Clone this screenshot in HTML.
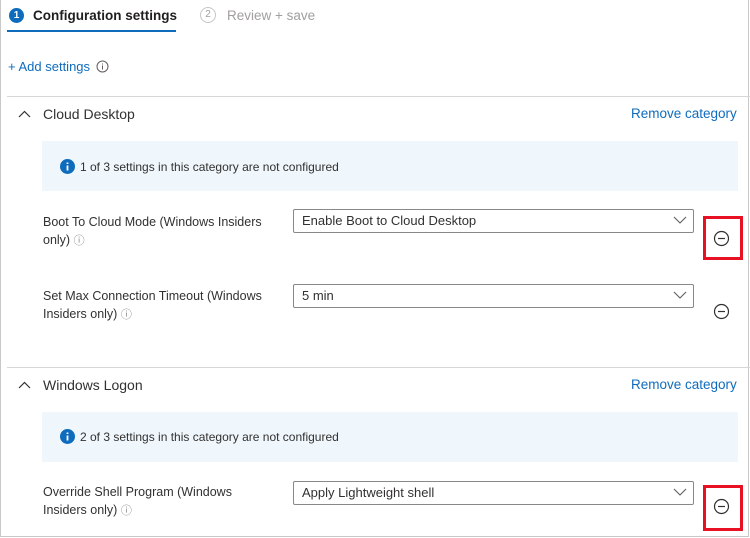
<!DOCTYPE html><html><head><style>
body{margin:0;width:750px;height:538px;position:relative;background:#fff;font-family:"Liberation Sans",sans-serif;overflow:hidden;color:#323130}
.a{position:absolute;white-space:nowrap}
.frame{position:absolute;left:0;top:0;width:747px;height:536px;border:1px solid #c8c8c8;border-top:none}
.hr{position:absolute;left:7px;right:0;height:1px;background:#d6d6d6}
.blue{color:#0f6cbd}
.info{position:absolute;left:42px;width:696px;height:50px;background:#eff6fc}
.dd{position:absolute;left:293px;width:391px;height:22px;border:1px solid #8a8886;border-radius:2px;font-size:13px;line-height:22px;padding-left:8px;box-sizing:content-box}
.dd svg{position:absolute;right:6px;top:6px}
.red{position:absolute;left:703px;width:34px;border:3px solid #e81123}
.lab{font-size:12.5px;line-height:18px}
</style></head><body>
<div class="frame"></div>
<div class="a" style="left:9px;top:8px;width:15px;height:15px;border-radius:50%;background:#0f6cbd;color:#fff;font-size:10px;font-weight:bold;text-align:center;line-height:15px">1</div>
<div class="a" style="left:33px;top:8px;font-size:13.5px;font-weight:bold;color:#201f1e">Configuration settings</div>
<div class="a" style="left:7px;top:30px;width:169px;height:2px;background:#0f6cbd"></div>
<div class="a" style="left:200px;top:7px;width:14px;height:14px;border-radius:50%;border:1px solid #c8c6c4;color:#a19f9d;font-size:10px;text-align:center;line-height:14px">2</div>
<div class="a" style="left:227px;top:8px;font-size:13.5px;color:#a19f9d">Review + save</div>
<div class="a blue" style="left:8px;top:59px;font-size:13px">+ Add settings</div>
<svg class="a" style="left:96px;top:60px" width="13" height="13"><circle cx="6.5" cy="6.5" r="5.5" fill="none" stroke="#605e5c"/><path d="M6.5 5.5v4M6.5 3.5v1" stroke="#605e5c"/></svg>
<div class="hr" style="top:96px"></div>
<svg class="a" style="left:18px;top:110px" width="13" height="8"><path d="M1 7l5.5-5.5L12 7" fill="none" stroke="#323130" stroke-width="1.2"/></svg>
<div class="a" style="left:43px;top:106px;font-size:14px">Cloud Desktop</div>
<div class="a blue" style="left:631px;top:106px;font-size:13.5px">Remove category</div>
<div class="info" style="top:141px"></div>
<svg class="a" style="left:60px;top:159px" width="15" height="15"><circle cx="7.5" cy="7.5" r="7.5" fill="#0f6cbd"/><path d="M7.5 6.5v5M7.5 3.5v1.5" stroke="#fff" stroke-width="1.8"/></svg>
<div class="a" style="left:80px;top:160px;font-size:12px">1 of 3 settings in this category are not configured</div>
<div class="a lab" style="left:43px;top:213px">Boot To Cloud Mode (Windows Insiders<br>only) <span style="color:#8a8886;font-size:11px">ⓘ</span></div>
<div class="dd" style="top:209px">Enable Boot to Cloud Desktop<svg width="14" height="9"><path d="M1 1l6 6 6-6" fill="none" stroke="#605e5c" stroke-width="1.1"/></svg></div>
<div class="red" style="top:216px;height:38px"></div>
<svg class="a" style="left:713px;top:230px" width="17" height="17"><circle cx="8.5" cy="8.5" r="7" fill="none" stroke="#323130" stroke-width="1.2"/><path d="M5 8.5h7" stroke="#323130" stroke-width="1.2"/></svg>
<div class="a lab" style="left:43px;top:287px">Set Max Connection Timeout (Windows<br>Insiders only) <span style="color:#8a8886;font-size:11px">ⓘ</span></div>
<div class="dd" style="top:284px">5 min<svg width="14" height="9"><path d="M1 1l6 6 6-6" fill="none" stroke="#605e5c" stroke-width="1.1"/></svg></div>
<svg class="a" style="left:713px;top:303px" width="17" height="17"><circle cx="8.5" cy="8.5" r="7" fill="none" stroke="#323130" stroke-width="1.2"/><path d="M5 8.5h7" stroke="#323130" stroke-width="1.2"/></svg>
<div class="hr" style="top:367px"></div>
<svg class="a" style="left:18px;top:381px" width="13" height="8"><path d="M1 7l5.5-5.5L12 7" fill="none" stroke="#323130" stroke-width="1.2"/></svg>
<div class="a" style="left:43px;top:377px;font-size:14px">Windows Logon</div>
<div class="a blue" style="left:631px;top:377px;font-size:13.5px">Remove category</div>
<div class="info" style="top:412px"></div>
<svg class="a" style="left:60px;top:429px" width="15" height="15"><circle cx="7.5" cy="7.5" r="7.5" fill="#0f6cbd"/><path d="M7.5 6.5v5M7.5 3.5v1.5" stroke="#fff" stroke-width="1.8"/></svg>
<div class="a" style="left:80px;top:430px;font-size:12px">2 of 3 settings in this category are not configured</div>
<div class="a lab" style="left:43px;top:483px">Override Shell Program (Windows<br>Insiders only) <span style="color:#8a8886;font-size:11px">ⓘ</span></div>
<div class="dd" style="top:481px">Apply Lightweight shell<svg width="14" height="9"><path d="M1 1l6 6 6-6" fill="none" stroke="#605e5c" stroke-width="1.1"/></svg></div>
<div class="red" style="top:485px;height:40px"></div>
<svg class="a" style="left:713px;top:498px" width="17" height="17"><circle cx="8.5" cy="8.5" r="7" fill="none" stroke="#323130" stroke-width="1.2"/><path d="M5 8.5h7" stroke="#323130" stroke-width="1.2"/></svg>
</body></html>
